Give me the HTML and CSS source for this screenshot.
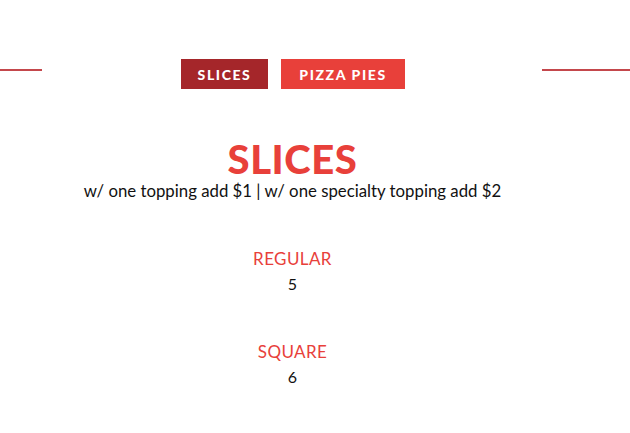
FILE: index.html
```html
<!DOCTYPE html>
<html>
<head>
<meta charset="utf-8">
<link rel="stylesheet" href="styles.css">
</head>
<body>
<header class="header">
  <span class="rule rule-left"></span>
  <nav class="tabs">
    <a class="tab tab-active">SLICES</a>
    <a class="tab">PIZZA PIES</a>
  </nav>
  <span class="rule rule-right"></span>
</header>
<main class="menu">
  <h1 class="title">SLICES</h1>
  <p class="note">w/ one topping add $1 | w/ one specialty topping add $2</p>
  <div class="item">
    <h2 class="item-name">REGULAR</h2>
    <div class="item-price">5</div>
  </div>
  <div class="item">
    <h2 class="item-name">SQUARE</h2>
    <div class="item-price">6</div>
  </div>
</main>
</body>
</html>
```
FILE: styles.css
```css
html, body {
  margin: 0;
  padding: 0;
  background: #ffffff;
}
body {
  font-family: "Lato", "Liberation Sans", sans-serif;
  color: #111;
  width: 630px;
}
.header {
  display: flex;
  align-items: flex-start;
  padding-top: 59px;
}
.rule {
  display: block;
  height: 2px;
  background: #c4474c;
  margin-top: 10px;
}
.rule-left {
  width: 42px;
  margin-right: 139px;
}
.rule-right {
  flex: 1;
  margin-left: 137px;
}
.tabs {
  display: flex;
  gap: 13px;
}
.tab {
  display: flex;
  align-items: center;
  justify-content: center;
  height: 30px;
  background: #e8403a;
  color: #fff;
  font-family: "Lato", sans-serif;
  font-weight: 900;
  font-size: 14px;
  letter-spacing: 1.6px;
  width: 124px;
}
.tab-active {
  background: #a5262a;
  width: 87px;
}
.menu {
  width: 585px;
  text-align: center;
}
.title {
  margin: 48px 0 0;
  font-size: 40px;
  line-height: 44px;
  font-weight: 900;
  color: #e8403a;
  letter-spacing: 0.6px;
}
.note {
  margin: 0;
  font-size: 16.8px;
  line-height: 20px;
}
.item {
  margin-top: 47px;
}
.item + .item {
  margin-top: 45px;
}
.item-name {
  margin: 0;
  font-size: 17px;
  line-height: 22px;
  font-weight: 400;
  color: #e8403a;
  letter-spacing: 0.4px;
}
.item-price {
  font-size: 16px;
  line-height: 24px;
  margin-top: 2px;
}
```
